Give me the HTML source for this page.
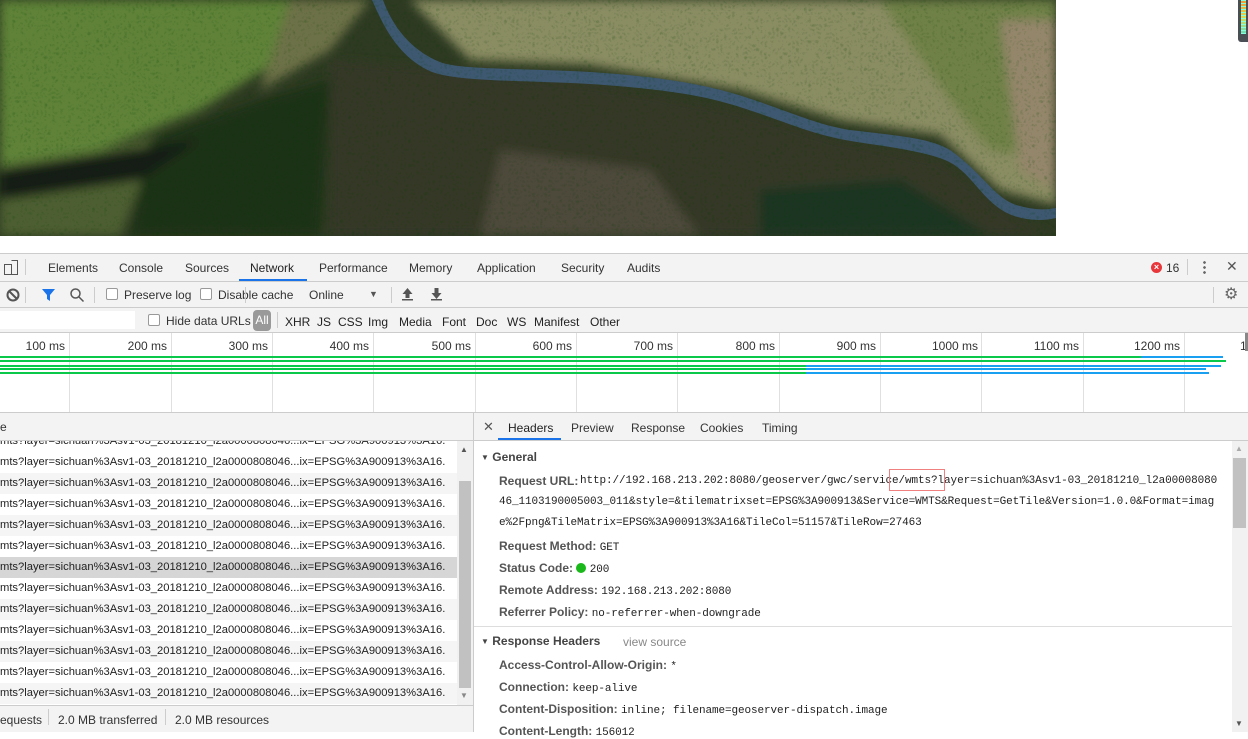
<!DOCTYPE html>
<html><head><meta charset="utf-8"><style>
*{box-sizing:border-box;margin:0;padding:0}
body{width:1248px;height:732px;overflow:hidden;background:#fff;font-family:"Liberation Sans",sans-serif;font-size:12px;color:#333;position:relative}
.a{position:absolute;white-space:nowrap}
.bar{background:#f3f3f3;border-bottom:1px solid #ccc}
.sep{position:absolute;width:1px;background:#ccc}
.cb{position:absolute;width:12px;height:12px;border:1px solid #999;border-radius:2px;background:#fff}
.m{font-family:"Liberation Mono",monospace;font-size:11px;letter-spacing:-0.1px;color:#222}
.lbl{color:#555;font-weight:bold;font-size:12px}
.row{position:absolute;left:0;width:457px;height:21px;overflow:hidden;line-height:21px;font-size:11.2px;color:#222;white-space:nowrap}
.gl{position:absolute;top:333px;height:80px;width:1px;background:#e0e0e0}
.tl{position:absolute;top:339px;font-size:12px;color:#333;text-align:right;width:80px}
.gb{position:absolute;height:3px;background:#0ac94a}
.bb{position:absolute;height:2px;background:#1aa0f0}
</style></head><body>
<svg class="a" style="left:0;top:0" width="1056" height="236" viewBox="0 0 1056 236">
<defs><filter id="bl"><feGaussianBlur stdDeviation="5"/></filter>
<filter id="n"><feTurbulence baseFrequency="0.25" numOctaves="2" seed="3"/><feColorMatrix values="0 0 0 0 0  0 0 0 0 0.05  0 0 0 0 0  0 0 0 0.9 -0.25"/></filter></defs>
<rect width="1056" height="236" fill="#2e3a22"/>
<g filter="url(#bl)">
<path d="M0 0H320L280 60L200 110L100 150L0 165Z" fill="#5f8239"/>
<path d="M290 0H370L330 50L260 90Z" fill="#6d7146"/>
<path d="M0 165L100 150L160 135L120 236H0Z" fill="#4d5e33"/>
<path d="M410 0H1056V205L1000 190L940 135L840 120L740 90L590 65L470 60Z" fill="#8a8c62"/>
<path d="M880 0H1056V160L990 150L950 100Z" fill="#6f8147"/>
<path d="M1000 20H1056V190L1020 170Z" fill="#94866a"/>
<path d="M150 140L260 100L330 80L320 236H130Z" fill="#1f3119"/>
<path d="M330 60L460 70L600 85L740 110L840 140L940 160L1010 215L1056 236H330Z" fill="#343828"/>
<path d="M500 150L650 170L700 236H480Z" fill="#4e4a3a"/>
<path d="M760 190L900 180L990 236H760Z" fill="#1e3520"/>
<path d="M0 170L130 150L200 140L140 180L0 200Z" fill="#151d14"/>
</g>
<path d="M383 0C392 25 410 50 440 62C460 70 520 68 590 72C680 78 720 88 760 102C800 116 820 125 850 130C900 136 930 138 950 150C985 175 995 200 1020 206C1035 210 1045 210 1056 208L1056 218C1040 222 1020 220 1005 212C980 198 970 170 945 160C920 150 880 146 845 140C810 133 790 124 755 112C715 98 680 90 590 84C520 80 460 82 432 72C400 58 385 30 372 0Z" fill="#3d5870"/>
<rect width="1056" height="236" filter="url(#n)" opacity="0.5"/>
</svg>
<div class="a" style="left:1238px;top:0;width:10px;height:42px;background:#4a4e55;border-radius:0 0 0 3px"></div>
<div class="a" style="left:1241px;top:0;width:5px;height:34px;background:repeating-linear-gradient(#8fd 0 1px,transparent 1px 3px),linear-gradient(#e93,#dd5,#6db)"></div>

<div class="a bar" style="left:0;top:253px;width:1248px;height:29px;border-top:1px solid #ccc"></div>
<svg class="a" style="left:3px;top:259px" width="16" height="16"><rect x="1.5" y="5.5" width="7" height="10" fill="none" stroke="#555"/><path d="M8.5 1.5h6v14h-6" fill="none" stroke="#555"/></svg>
<div class="sep" style="left:25px;top:259px;height:16px"></div>
<div class="a" style="top:261px;left:48px">Elements</div>
<div class="a" style="top:261px;left:119px">Console</div>
<div class="a" style="top:261px;left:185px">Sources</div>
<div class="a" style="top:261px;left:250px;color:#222">Network</div>
<div class="a" style="top:279px;left:239px;width:68px;height:2px;background:#1a73e8"></div>
<div class="a" style="top:261px;left:319px">Performance</div>
<div class="a" style="top:261px;left:409px">Memory</div>
<div class="a" style="top:261px;left:477px">Application</div>
<div class="a" style="top:261px;left:561px">Security</div>
<div class="a" style="top:261px;left:627px">Audits</div>
<div class="a" style="top:262px;left:1151px;width:11px;height:11px;border-radius:50%;background:#e8363b;color:#fff;font-size:9px;line-height:11px;text-align:center;font-weight:bold">×</div>
<div class="a" style="top:261px;left:1166px">16</div>
<div class="sep" style="left:1187px;top:259px;height:16px"></div>
<div class="a" style="top:260px;left:1203px;width:3px;height:15px;background:radial-gradient(circle,#666 1.2px,transparent 1.5px) 0 0/3px 5px"></div>
<div class="a" style="top:258px;left:1226px;font-size:14px;color:#555">✕</div>

<div class="a bar" style="left:0;top:282px;width:1248px;height:26px"></div>
<svg class="a" style="left:5px;top:287px" width="16" height="16"><circle cx="8" cy="8" r="5.5" fill="none" stroke="#555" stroke-width="2"/><path d="M4 4l8 8" stroke="#555" stroke-width="2"/></svg>
<div class="sep" style="left:25px;top:287px;height:16px"></div>
<svg class="a" style="left:41px;top:288px" width="15" height="14"><path d="M1 1h13l-5 6v6l-3-2v-4z" fill="#1a73e8"/></svg>
<svg class="a" style="left:69px;top:287px" width="16" height="16"><circle cx="6.5" cy="6.5" r="4.5" fill="none" stroke="#555" stroke-width="1.5"/><path d="M10 10l4.5 4.5" stroke="#555" stroke-width="1.5"/></svg>
<div class="sep" style="left:94px;top:287px;height:16px"></div>
<div class="cb" style="left:106px;top:288px"></div><div class="a" style="left:124px;top:288px">Preserve log</div>
<div class="cb" style="left:200px;top:288px"></div><div class="a" style="left:218px;top:288px">Disable cache</div>
<div class="sep" style="left:245px;top:287px;height:16px"></div>
<div class="a" style="left:309px;top:288px">Online</div>
<div class="a" style="left:369px;top:289px;font-size:9px;color:#555">▼</div>
<div class="sep" style="left:391px;top:287px;height:16px"></div>
<svg class="a" style="left:401px;top:287px" width="13" height="14"><path d="M6.5 1L1.5 7h3v4h4V7h3z" fill="#555"/><rect x="1" y="12" width="11" height="1.5" fill="#555"/></svg>
<svg class="a" style="left:430px;top:287px" width="13" height="14"><path d="M6.5 12L1.5 6h3V1h4v5h3z" fill="#555"/><rect x="1" y="12" width="11" height="1.5" fill="#555"/></svg>
<div class="sep" style="left:1213px;top:287px;height:16px"></div>
<div class="a" style="left:1224px;top:284px;font-size:16px;color:#666">⚙</div>

<div class="a bar" style="left:0;top:308px;width:1248px;height:25px"></div>
<div class="a" style="left:0;top:311px;width:135px;height:18px;background:#fff"></div>
<div class="cb" style="left:148px;top:314px"></div><div class="a" style="left:166px;top:314px">Hide data URLs</div>
<div class="a" style="left:253px;top:310px;width:18px;height:21px;background:#999;border-radius:4px;color:#fff;text-align:center;line-height:21px">All</div>
<div class="sep" style="left:277px;top:312px;height:16px"></div>
<div class="a" style="left:285px;top:315px;color:#222">XHR</div>
<div class="a" style="left:317px;top:315px;color:#222">JS</div>
<div class="a" style="left:338px;top:315px;color:#222">CSS</div>
<div class="a" style="left:368px;top:315px;color:#222">Img</div>
<div class="a" style="left:399px;top:315px;color:#222">Media</div>
<div class="a" style="left:442px;top:315px;color:#222">Font</div>
<div class="a" style="left:476px;top:315px;color:#222">Doc</div>
<div class="a" style="left:507px;top:315px;color:#222">WS</div>
<div class="a" style="left:534px;top:315px;color:#222">Manifest</div>
<div class="a" style="left:590px;top:315px;color:#222">Other</div>

<div class="gl" style="left:69px"></div><div class="gl" style="left:171px"></div><div class="gl" style="left:272px"></div><div class="gl" style="left:373px"></div><div class="gl" style="left:475px"></div><div class="gl" style="left:576px"></div><div class="gl" style="left:677px"></div><div class="gl" style="left:779px"></div><div class="gl" style="left:880px"></div><div class="gl" style="left:981px"></div><div class="gl" style="left:1083px"></div><div class="gl" style="left:1184px"></div>
<div class="tl" style="left:-15px">100 ms</div><div class="tl" style="left:87px">200 ms</div><div class="tl" style="left:188px">300 ms</div><div class="tl" style="left:289px">400 ms</div><div class="tl" style="left:391px">500 ms</div><div class="tl" style="left:492px">600 ms</div><div class="tl" style="left:593px">700 ms</div><div class="tl" style="left:695px">800 ms</div><div class="tl" style="left:796px">900 ms</div><div class="tl" style="left:898px">1000 ms</div><div class="tl" style="left:999px">1100 ms</div><div class="tl" style="left:1100px">1200 ms</div>
<div class="a" style="left:1240px;top:339px">1</div>
<div class="a" style="left:1245px;top:333px;width:3px;height:18px;background:#888"></div>
<div class="gb" style="left:0;top:356px;width:1141px;height:2px"></div><div class="bb" style="left:1141px;top:356px;width:82px"></div>
<div class="gb" style="left:0;top:360px;width:1226px;height:2px"></div>
<div class="gb" style="left:0;top:365px;width:806px;height:2px"></div><div class="bb" style="left:806px;top:365px;width:415px"></div>
<div class="gb" style="left:0;top:368px;width:806px;height:2px"></div><div class="bb" style="left:806px;top:368px;width:400px"></div>
<div class="gb" style="left:0;top:372px;width:806px;height:2px"></div><div class="bb" style="left:806px;top:372px;width:403px"></div>
<div class="a" style="left:0;top:412px;width:1248px;height:1px;background:#ccc"></div>

<div class="row" style="top:431px">mts?layer=sichuan%3Asv1-03_20181210_l2a0000808046...ix=EPSG%3A900913%3A16.</div>
<div class="row" style="top:452px;background:#fff">mts?layer=sichuan%3Asv1-03_20181210_l2a0000808046...ix=EPSG%3A900913%3A16.</div>
<div class="row" style="top:473px;background:#f5f5f5">mts?layer=sichuan%3Asv1-03_20181210_l2a0000808046...ix=EPSG%3A900913%3A16.</div>
<div class="row" style="top:494px;background:#fff">mts?layer=sichuan%3Asv1-03_20181210_l2a0000808046...ix=EPSG%3A900913%3A16.</div>
<div class="row" style="top:515px;background:#f5f5f5">mts?layer=sichuan%3Asv1-03_20181210_l2a0000808046...ix=EPSG%3A900913%3A16.</div>
<div class="row" style="top:536px;background:#fff">mts?layer=sichuan%3Asv1-03_20181210_l2a0000808046...ix=EPSG%3A900913%3A16.</div>
<div class="row" style="top:557px;background:#d6d6d6">mts?layer=sichuan%3Asv1-03_20181210_l2a0000808046...ix=EPSG%3A900913%3A16.</div>
<div class="row" style="top:578px;background:#fff">mts?layer=sichuan%3Asv1-03_20181210_l2a0000808046...ix=EPSG%3A900913%3A16.</div>
<div class="row" style="top:599px;background:#f5f5f5">mts?layer=sichuan%3Asv1-03_20181210_l2a0000808046...ix=EPSG%3A900913%3A16.</div>
<div class="row" style="top:620px;background:#fff">mts?layer=sichuan%3Asv1-03_20181210_l2a0000808046...ix=EPSG%3A900913%3A16.</div>
<div class="row" style="top:641px;background:#f5f5f5">mts?layer=sichuan%3Asv1-03_20181210_l2a0000808046...ix=EPSG%3A900913%3A16.</div>
<div class="row" style="top:662px;background:#fff">mts?layer=sichuan%3Asv1-03_20181210_l2a0000808046...ix=EPSG%3A900913%3A16.</div>
<div class="row" style="top:683px;background:#f5f5f5">mts?layer=sichuan%3Asv1-03_20181210_l2a0000808046...ix=EPSG%3A900913%3A16.</div>
<div class="a bar" style="left:0;top:413px;width:473px;height:28px"></div>
<div class="a" style="left:0;top:420px">e</div>
<div class="a" style="left:457px;top:441px;width:16px;height:265px;background:#f1f1f1"></div>
<div class="a" style="left:459px;top:481px;width:12px;height:207px;background:#c1c1c1"></div>
<div class="a" style="left:460px;top:445px;font-size:8px;color:#555">▲</div>
<div class="a" style="left:460px;top:691px;font-size:8px;color:#888">▼</div>
<div class="a bar" style="left:0;top:705px;width:473px;height:27px;border-top:1px solid #ccc;border-bottom:none"></div>
<div class="a" style="left:0;top:713px">equests</div>
<div class="sep" style="left:48px;top:709px;height:16px"></div>
<div class="a" style="left:58px;top:713px">2.0 MB transferred</div>
<div class="sep" style="left:165px;top:709px;height:16px"></div>
<div class="a" style="left:175px;top:713px">2.0 MB resources</div>
<div class="a" style="left:473px;top:413px;width:1px;height:319px;background:#ccc"></div>

<div class="a bar" style="left:474px;top:413px;width:774px;height:28px"></div>
<div class="a" style="left:483px;top:419px;font-size:13px;color:#555">✕</div>
<div class="a" style="left:508px;top:421px;color:#222">Headers</div>
<div class="a" style="left:498px;top:438px;width:63px;height:2px;background:#1a73e8"></div>
<div class="a" style="left:571px;top:421px">Preview</div>
<div class="a" style="left:631px;top:421px">Response</div>
<div class="a" style="left:700px;top:421px">Cookies</div>
<div class="a" style="left:762px;top:421px">Timing</div>

<div class="a lbl" style="left:481px;top:450px;color:#444"><span style="font-size:8px;position:relative;top:-1px">▼</span> General</div>
<div class="a" style="left:499px;top:474px"><span class="lbl">Request URL:</span></div>
<div class="a m" style="left:580px;top:475px">http://192.168.213.202:8080/geoserver/gwc/service/wmts?layer=sichuan%3Asv1-03_20181210_l2a00008080</div>
<div class="a" style="left:889px;top:469px;width:56px;height:22px;border:1.5px solid #f08080"></div>
<div class="a m" style="left:499px;top:496px">46_1103190005003_011&amp;style=&amp;tilematrixset=EPSG%3A900913&amp;Service=WMTS&amp;Request=GetTile&amp;Version=1.0.0&amp;Format=imag</div>
<div class="a m" style="left:499px;top:517px">e%2Fpng&amp;TileMatrix=EPSG%3A900913%3A16&amp;TileCol=51157&amp;TileRow=27463</div>
<div class="a" style="left:499px;top:539px"><span class="lbl">Request Method:</span> <span class="m">GET</span></div>
<div class="a" style="left:499px;top:561px"><span class="lbl">Status Code:</span> <span style="display:inline-block;width:10px;height:10px;border-radius:50%;background:#1ab81a;vertical-align:-1px"></span> <span class="m">200</span></div>
<div class="a" style="left:499px;top:583px"><span class="lbl">Remote Address:</span> <span class="m">192.168.213.202:8080</span></div>
<div class="a" style="left:499px;top:605px"><span class="lbl">Referrer Policy:</span> <span class="m">no-referrer-when-downgrade</span></div>
<div class="a" style="left:474px;top:626px;width:758px;height:1px;background:#ddd"></div>
<div class="a lbl" style="left:481px;top:634px;color:#444"><span style="font-size:8px;position:relative;top:-1px">▼</span> Response Headers</div>
<div class="a" style="left:623px;top:635px;color:#888">view source</div>
<div class="a" style="left:499px;top:658px"><span class="lbl">Access-Control-Allow-Origin:</span> <span class="m">*</span></div>
<div class="a" style="left:499px;top:680px"><span class="lbl">Connection:</span> <span class="m">keep-alive</span></div>
<div class="a" style="left:499px;top:702px"><span class="lbl">Content-Disposition:</span> <span class="m">inline; filename=geoserver-dispatch.image</span></div>
<div class="a" style="left:499px;top:724px"><span class="lbl">Content-Length:</span> <span class="m">156012</span></div>
<div class="a" style="left:1232px;top:441px;width:16px;height:291px;background:#f1f1f1"></div>
<div class="a" style="left:1233px;top:458px;width:13px;height:70px;background:#c1c1c1"></div>
<div class="a" style="left:1235px;top:444px;font-size:8px;color:#aaa">▲</div>
<div class="a" style="left:1235px;top:719px;font-size:8px;color:#555">▼</div>
</body></html>
